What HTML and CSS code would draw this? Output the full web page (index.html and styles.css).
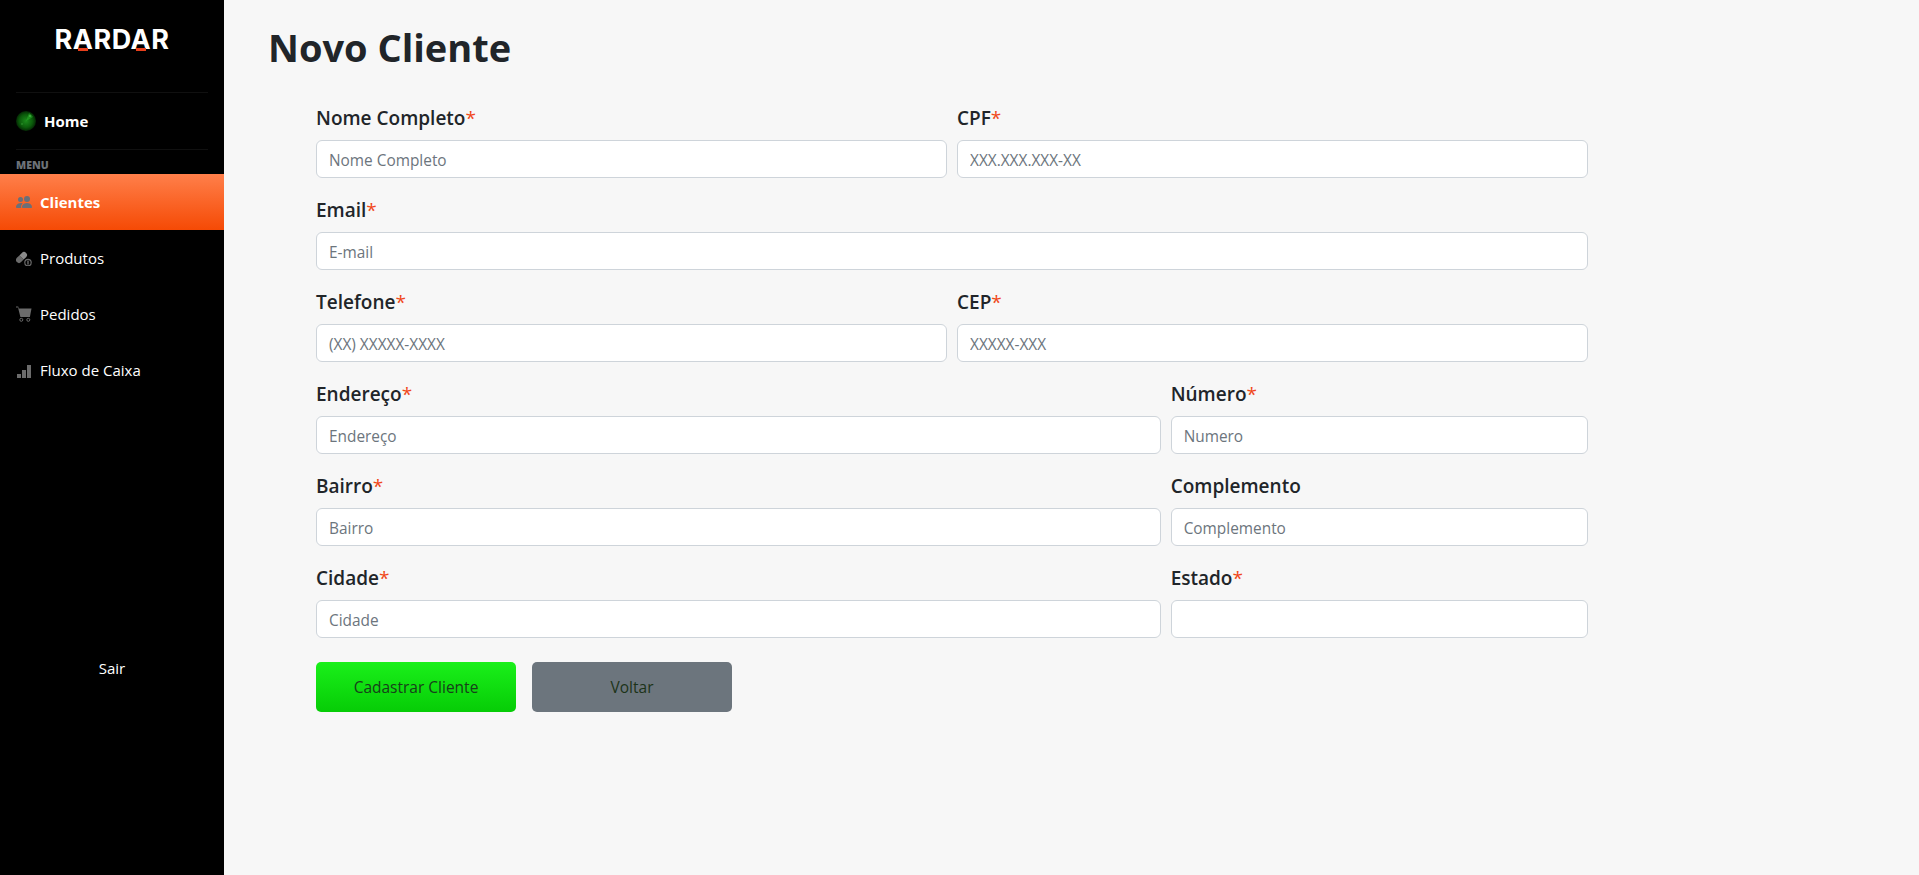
FILE: index.html
```html
<!DOCTYPE html>
<html lang="pt-BR">
<head>
<meta charset="utf-8">
<title>Novo Cliente</title>
<link rel="stylesheet" href="styles.css">
</head>
<body>
<div class="layout">
  <aside class="sidebar">
    <div class="brand"><span class="logo">R<span class="logo-a">A</span>RD<span class="logo-a">A</span>R</span></div>
    <a class="home">
      <svg class="radar" viewBox="0 0 20 20" aria-hidden="true">
        <defs><radialGradient id="rg" cx="50%" cy="50%" r="50%"><stop offset="0" stop-color="#1c8c1c"/><stop offset=".65" stop-color="#0b5c0b"/><stop offset="1" stop-color="#042804"/></radialGradient></defs>
        <circle cx="10" cy="10" r="10" fill="url(#rg)"/>
        <path d="M10 10 L13 2 A9 9 0 0 1 17 6 Z" fill="#2cb82c" opacity=".5"/>
        <circle cx="14" cy="5" r=".8" fill="#5fd05f"/><circle cx="6" cy="13" r=".7" fill="#3fa83f"/>
      </svg>
      <span>Home</span>
    </a>
    <div class="menu-title">MENU</div>
    <nav class="nav">
      <a class="nav-item active">
        <svg class="ico" viewBox="0 0 16 16" aria-hidden="true"><path d="M7 14s-1 0-1-1 1-4 5-4 5 3 5 4-1 1-1 1H7Zm4-6a3 3 0 1 0 0-6 3 3 0 0 0 0 6Zm-5.784 6A2.238 2.238 0 0 1 5 13c0-1.355.68-2.75 1.936-3.72A6.325 6.325 0 0 0 5 9c-4 0-5 3-5 4s1 1 1 1h4.216ZM4.5 8a2.5 2.5 0 1 0 0-5 2.5 2.5 0 0 0 0 5Z"/></svg>
        <span>Clientes</span>
      </a>
      <a class="nav-item">
        <svg class="ico" viewBox="0 0 16 16" aria-hidden="true">
          <g transform="rotate(-45 5.5 7.5)"><path d="M5.5 4.5H2A3 3 0 0 0 2 10.5H5.5Z"/><path class="ico-light" d="M5.5 4.5H9A3 3 0 0 1 9 10.5H5.5Z"/></g>
          <circle cx="12" cy="12.6" r="4" fill="#000"/>
          <circle cx="12" cy="12.6" r="3.2" fill="none" stroke="#6b6b6b" stroke-width="1.2"/><rect x="11.3" y="10.6" width="1.4" height="4"/>
        </svg>
        <span>Produtos</span>
      </a>
      <a class="nav-item">
        <svg class="ico" viewBox="0 0 16 16" aria-hidden="true"><path d="M0 .5h2.2l.6 2H15.5L13.9 11H4.4L2 1.5H0Z"/><circle cx="5.3" cy="13.8" r="1.5" fill="none" stroke="#6b6b6b" stroke-width="1"/><circle cx="12.3" cy="13.8" r="1.5" fill="none" stroke="#6b6b6b" stroke-width="1"/></svg>
        <span>Pedidos</span>
      </a>
      <a class="nav-item">
        <svg class="ico" viewBox="0 0 16 16" aria-hidden="true"><rect x="1" y="12" width="4" height="4"/><rect x="6" y="8" width="4" height="8"/><rect x="11" y="3" width="4" height="13"/></svg>
        <span>Fluxo de Caixa</span>
      </a>
    </nav>
    <a class="logout">Sair</a>
  </aside>
  <main class="main">
    <h1 class="title">Novo Cliente</h1>
    <form class="form">
      <div class="field s6"><label>Nome Completo<b>*</b></label><input type="text" placeholder="Nome Completo"></div>
      <div class="field s6"><label>CPF<b>*</b></label><input type="text" placeholder="XXX.XXX.XXX-XX"></div>
      <div class="field s12"><label>Email<b>*</b></label><input type="text" placeholder="E-mail"></div>
      <div class="field s6"><label>Telefone<b>*</b></label><input type="text" placeholder="(XX) XXXXX-XXXX"></div>
      <div class="field s6"><label>CEP<b>*</b></label><input type="text" placeholder="XXXXX-XXX"></div>
      <div class="field s8"><label>Endereço<b>*</b></label><input type="text" placeholder="Endereço"></div>
      <div class="field s4"><label>Número<b>*</b></label><input type="text" placeholder="Numero"></div>
      <div class="field s8"><label>Bairro<b>*</b></label><input type="text" placeholder="Bairro"></div>
      <div class="field s4"><label>Complemento</label><input type="text" placeholder="Complemento"></div>
      <div class="field s8"><label>Cidade<b>*</b></label><input type="text" placeholder="Cidade"></div>
      <div class="field s4"><label>Estado<b>*</b></label><input type="text"></div>
      <div class="actions">
        <button type="button" class="btn btn-green">Cadastrar Cliente</button>
        <button type="button" class="btn btn-gray">Voltar</button>
      </div>
    </form>
  </main>
</div>
</body>
</html>
```
FILE: styles.css
```css
* { box-sizing: border-box; }
html, body { margin: 0; height: 100%; }
body { font-family: "Open Sans", "Noto Sans", sans-serif; background: #f7f7f7; color: #212529; overflow: hidden; }
.layout { display: flex; height: 875px; }
.sidebar { width: 224px; flex: none; background: #000; display: flex; flex-direction: column; color: #fff; }
.brand { height: 93px; margin: 0 16px; border-bottom: 1px solid #101010; display: flex; justify-content: center; padding-top: 20px; }
.logo { font-family: "Inter", sans-serif; font-weight: 700; font-size: 27px; line-height: 40px; height: 40px; letter-spacing: 0.5px; color: #fff; }
.logo-a { position: relative; }
.logo-a::after { content: ""; position: absolute; left: 5px; right: 5px; bottom: 5px; height: 3px; background: #e8401c; }
.home { height: 57px; margin: 0 16px; border-bottom: 1px solid #101010; display: flex; align-items: center; gap: 8px; font-weight: 700; font-size: 15px; }
.radar { width: 20px; height: 20px; }
.menu-title { height: 24px; padding: 9px 16px 0; font-size: 10.5px; line-height: 12px; font-weight: 800; color: #6d7278; }
.nav { display: flex; flex-direction: column; }
.nav-item { height: 56px; padding-left: 16px; display: flex; align-items: center; gap: 8px; font-size: 15px; color: #fff; }
.nav-item.active { font-weight: 700; background: linear-gradient(#ff7f4a, #f54a05); }
.ico { width: 16px; height: 16px; fill: #6b6b6b; flex: none; }
.ico-light { fill: #8c8c8c; }
.active .ico { fill: #6b6f78; }
.logout { margin-top: 242px; height: 56px; display: flex; align-items: center; justify-content: center; font-size: 15px; }
.main { flex: 1; padding: 23px 0 0 44px; }
.title { margin: 0 0 31px; font-size: 38px; line-height: 48px; font-weight: 700; }
.form { margin-left: 48px; width: 1272px; display: grid; grid-template-columns: repeat(12, 1fr); column-gap: 10px; }
.field { margin-bottom: 16px; display: flex; flex-direction: column; }
.s4 { grid-column: span 4; } .s6 { grid-column: span 6; } .s8 { grid-column: span 8; } .s12 { grid-column: span 12; }
label { font-size: 19px; line-height: 30px; margin-bottom: 8px; padding-top: 1px; height: 30px; font-weight: 600; }
label b { color: #f0481a; font-weight: 500; }
input { height: 38px; width: 100%; padding: 7px 12px 5px; border: 1px solid #ced4da; border-radius: 6px; background: #fff; font: 400 15.4px "Open Sans", sans-serif; color: #212529; outline: none; }
input::placeholder { color: #6c757d; opacity: 1; }
.actions { grid-column: span 12; display: flex; gap: 16px; margin-top: 8px; }
.btn { width: 200px; height: 50px; border: 0; border-radius: 5px; font: 500 15.5px "Open Sans", sans-serif; color: #17401a; }
.btn-green { background: linear-gradient(#1af01a, #06cc06); }
.btn-gray { background: #6c757d; color: #1c3318; }
```
